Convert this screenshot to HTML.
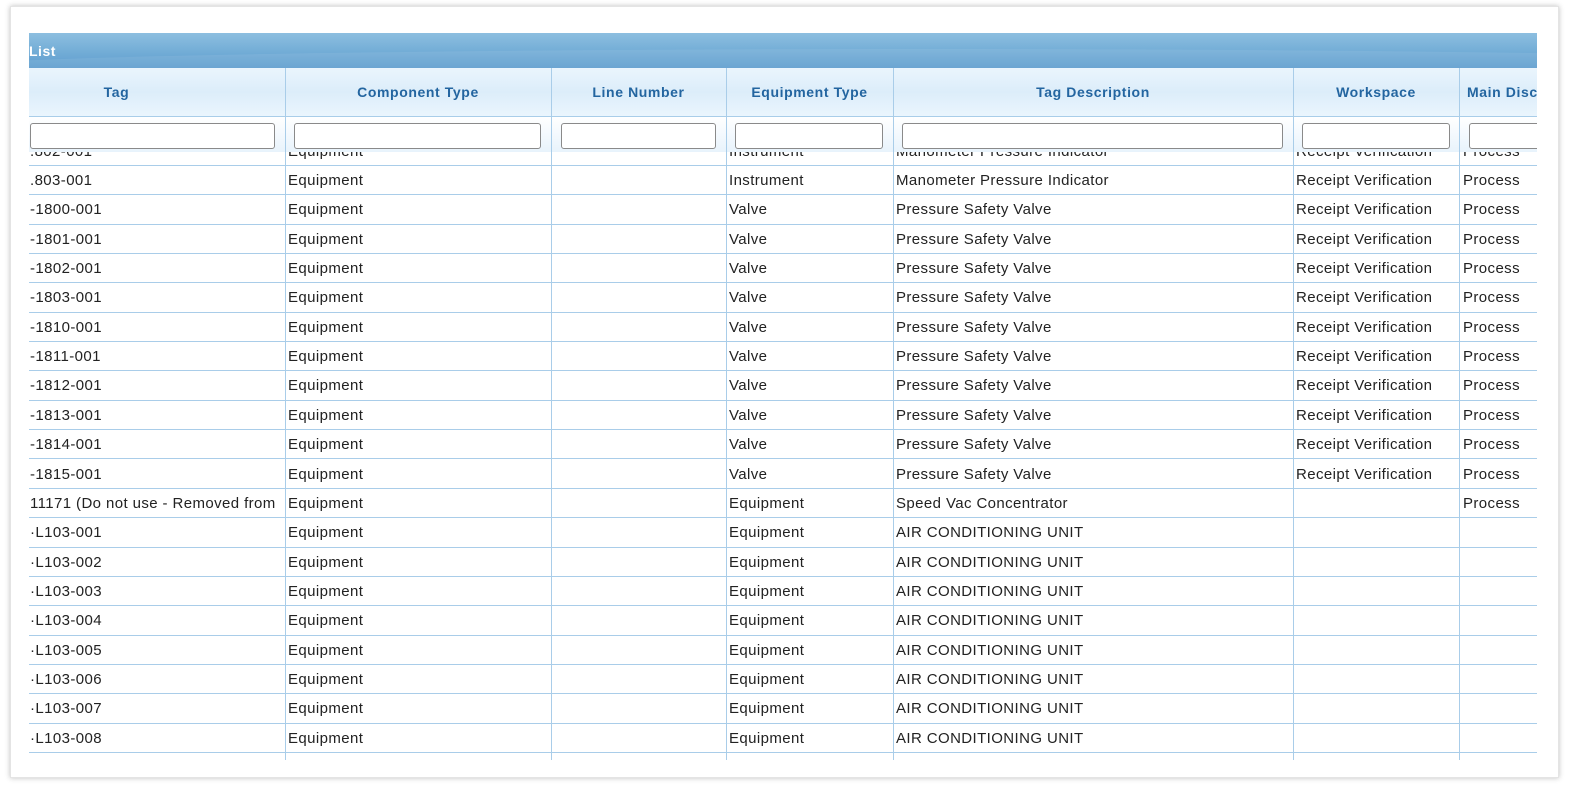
<!DOCTYPE html>
<html><head><meta charset="utf-8"><style>
*{box-sizing:border-box;margin:0;padding:0}
body{width:1578px;height:793px;background:#fff;position:relative;overflow:hidden;font-family:"Liberation Sans",sans-serif}
.card{position:absolute;left:10px;top:6px;width:1549px;height:772px;background:#fff;box-shadow:0 0 5px rgba(0,0,0,.25);border:1px solid #e4e4e4}
.panel{position:absolute;left:29px;top:33px;width:1508px;height:727px;overflow:hidden}
.title{position:absolute;left:0;top:0;width:100%;height:35px;background:linear-gradient(#8dbfe0,#72acd6 55%,#5f9ecf);color:#fff;font-weight:bold;font-size:14px;letter-spacing:.5px;line-height:36px;overflow:hidden}
.title:after{content:"";position:absolute;left:-100px;top:16px;width:2000px;height:40px;border-radius:50%;background:rgba(255,255,255,.08)}
.head{position:absolute;left:0;top:35px;width:100%;height:49px;background:linear-gradient(#eaf5fd,#dcedfa 50%,#eaf5fd);border-bottom:1px solid #a9cde9}
.filt{position:absolute;left:0;top:84px;width:100%;height:35px;background:linear-gradient(#fff,#e8f3fc)}
.h{position:absolute;top:0;height:49px;line-height:49px;text-align:center;color:#2365a0;font-weight:bold;font-size:14px;letter-spacing:.6px;white-space:nowrap}
.vl{position:absolute;top:35px;width:1px;height:692px;background:#a9cde9}
.in{position:absolute;top:6px;height:26px;border:1px solid #8a8a8a;border-radius:3px;background:#fff}
.body{position:absolute;left:0;top:119px;width:100%;height:601px;overflow:hidden}
.r{position:absolute;left:0;width:100%;height:29.35px;border-bottom:1px solid #a9cde9;font-size:15px;letter-spacing:.4px;color:#222;white-space:nowrap}
.r span{position:absolute;top:0;line-height:29px;overflow:hidden}
</style></head><body>
<div class="card"></div>
<div class="panel">
<div class="title">List</div>
<div class="head">
<div class="h" style="left:0;width:175px">Tag</div>
<div class="h" style="left:256px;width:266px">Component Type</div>
<div class="h" style="left:522px;width:175px">Line Number</div>
<div class="h" style="left:697px;width:167px">Equipment Type</div>
<div class="h" style="left:864px;width:400px">Tag Description</div>
<div class="h" style="left:1264px;width:166px">Workspace</div>
<div class="h" style="left:1438px;width:100px;text-align:left">Main Discipline</div>
</div>
<div class="filt">
<div class="in" style="left:1px;width:245px"></div>
<div class="in" style="left:265px;width:247px"></div>
<div class="in" style="left:532px;width:155px"></div>
<div class="in" style="left:706px;width:148px"></div>
<div class="in" style="left:873px;width:381px"></div>
<div class="in" style="left:1273px;width:148px"></div>
<div class="in" style="left:1440px;width:100px"></div>
</div>
<div class="body" id="b"></div>
<div class="vl" style="left:256px"></div>
<div class="vl" style="left:522px"></div>
<div class="vl" style="left:697px"></div>
<div class="vl" style="left:864px"></div>
<div class="vl" style="left:1264px"></div>
<div class="vl" style="left:1430px"></div>
</div>
<script>
var rows=[
[".802-001","Equipment","Instrument","Manometer Pressure Indicator","Receipt Verification","Process"],
[".803-001","Equipment","Instrument","Manometer Pressure Indicator","Receipt Verification","Process"],
["-1800-001","Equipment","Valve","Pressure Safety Valve","Receipt Verification","Process"],
["-1801-001","Equipment","Valve","Pressure Safety Valve","Receipt Verification","Process"],
["-1802-001","Equipment","Valve","Pressure Safety Valve","Receipt Verification","Process"],
["-1803-001","Equipment","Valve","Pressure Safety Valve","Receipt Verification","Process"],
["-1810-001","Equipment","Valve","Pressure Safety Valve","Receipt Verification","Process"],
["-1811-001","Equipment","Valve","Pressure Safety Valve","Receipt Verification","Process"],
["-1812-001","Equipment","Valve","Pressure Safety Valve","Receipt Verification","Process"],
["-1813-001","Equipment","Valve","Pressure Safety Valve","Receipt Verification","Process"],
["-1814-001","Equipment","Valve","Pressure Safety Valve","Receipt Verification","Process"],
["-1815-001","Equipment","Valve","Pressure Safety Valve","Receipt Verification","Process"],
["11171 (Do not use - Removed from","Equipment","Equipment","Speed Vac Concentrator","","Process"]];
for(var i=1;i<=8;i++)rows.push(["\u00b7L103-00"+i,"Equipment","Equipment","AIR CONDITIONING UNIT","",""]);
var h="",xs=[[1,254],[259,262],[700,160],[867,395],[1267,160],[1434,100]];
rows.forEach(function(r,i){
 h+='<div class="r" style="top:'+(-15.35+i*29.35)+'px">';
 r.forEach(function(t,j){h+='<span style="left:'+xs[j][0]+'px;width:'+xs[j][1]+'px">'+t+'</span>';});
 h+='</div>';});
document.getElementById("b").innerHTML=h;
</script>
</body></html>
